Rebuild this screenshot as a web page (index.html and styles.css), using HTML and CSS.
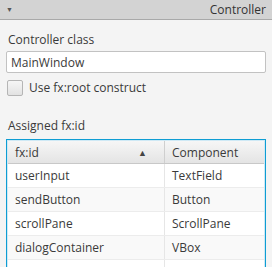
FILE: index.html
```html
<!DOCTYPE html>
<html lang="en">
<head>
    <meta charset="UTF-8">
    <title>Controller</title>
    <link rel="stylesheet" href="styles.css">
</head>
<body>
    <div class="titlebar">
        <span class="arrow">&#9660;</span>
        <span class="title">Controller</span>
    </div>
    <div class="pane">
        <div class="label first">Controller class</div>
        <input class="field" type="text" value="MainWindow">
        <label class="check">
            <span class="box"></span>
            <span>Use fx:root construct</span>
        </label>
        <div class="label assigned">Assigned fx:id</div>
        <div class="table">
            <div class="row head">
                <div class="cell id">fx:id <span class="sort">&#9650;</span></div>
                <div class="cell comp">Component</div>
            </div>
            <div class="row">
                <div class="cell id">userInput</div>
                <div class="cell comp">TextField</div>
            </div>
            <div class="row odd">
                <div class="cell id">sendButton</div>
                <div class="cell comp">Button</div>
            </div>
            <div class="row">
                <div class="cell id">scrollPane</div>
                <div class="cell comp">ScrollPane</div>
            </div>
            <div class="row odd">
                <div class="cell id">dialogContainer</div>
                <div class="cell comp">VBox</div>
            </div>
            <div class="row">
                <div class="cell id"></div>
                <div class="cell comp"></div>
            </div>
        </div>
    </div>
</body>
</html>
```

FILE: styles.css
```css
/* Inspector panel */
body {
    margin: 0;
    font-family: 'Open Sans', sans-serif;
    font-size: 12px;
    color: #3a3a3a;
    background-color: #f4f4f4;
    overflow: hidden;
}

.titlebar {
    height: 19px;
    display: flex;
    align-items: center;
    justify-content: space-between;
    padding: 0 6px;
    background-color: #d3d3d3;
    border-bottom: 1px solid #a9a9a9;
}

.arrow {
    font-size: 7px;
    color: #555;
}

.title {
    color: #333;
}

.pane {
    padding: 0 6px;
}

.label {
    height: 16px;
    line-height: 16px;
    padding-left: 2px;
}

.label.first {
    margin-top: 12px;
    margin-bottom: 3px;
}

.field {
    display: block;
    box-sizing: border-box;
    width: 100%;
    height: 22px;
    margin: 0;
    padding: 0 4px;
    border: 1px solid #c2c2c2;
    border-radius: 2px;
    background-color: #fff;
    font-family: inherit;
    font-size: 12px;
    color: #3a3a3a;
}

.check {
    display: flex;
    align-items: center;
    gap: 6px;
    margin-top: 6px;
    padding-left: 1px;
}

.box {
    width: 14px;
    height: 14px;
    border: 1px solid #b5b5b5;
    border-radius: 2px;
    background: linear-gradient(#f6f6f6, #e2e2e2);
}

.label.assigned {
    margin-top: 22px;
    margin-bottom: 5px;
}

.table {
    border: 1px solid #0e9dd3;
    box-shadow: inset 0 0 0 1px #cfe9f5;
    background-color: #fff;
    padding: 1px;
}

.row {
    display: flex;
    height: 23px;
    border-bottom: 1px solid #ececec;
}

.row.odd {
    background-color: #f9f9f9;
}

.row.head {
    height: 22px;
    background: linear-gradient(#f6f6f6, #e4e4e4);
    border-bottom: 1px solid #c8c8c8;
}

.cell {
    display: flex;
    align-items: center;
    padding-left: 7px;
}

.cell.id {
    box-sizing: border-box;
    width: 157px;
    justify-content: space-between;
    padding-right: 17px;
    border-right: 1px solid #e6e6e6;
}

.head .cell.id {
    border-right-color: #cfcfcf;
}

.cell.comp {
    flex: 1;
}

.sort {
    font-size: 9px;
    color: #444;
}
```
